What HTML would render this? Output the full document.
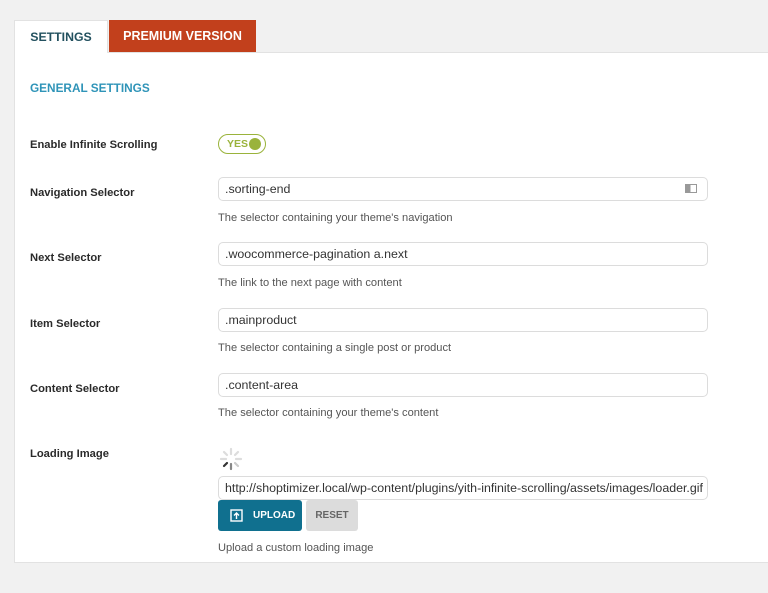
<!DOCTYPE html>
<html><head><style>
body{margin:0;width:768px;height:593px;background:#f1f1f1;font-family:"Liberation Sans",sans-serif;position:relative;overflow:hidden}
.a{position:absolute}
.tab1{left:14px;top:20px;width:94px;height:33px;background:#fff;color:#23515f;font-weight:bold;font-size:12.3px;line-height:33px;text-align:center;border:1px solid #e2e2e2;border-bottom:none;box-sizing:border-box}
.tab2{left:109px;top:20px;width:147px;height:32px;background:#c2401c;color:#fff;font-weight:bold;font-size:12.5px;line-height:33px;text-align:center}
.panel{left:14px;top:52px;width:760px;height:511px;background:#fff;border:1px solid #e2e2e2;box-sizing:border-box}
.h{left:30px;top:81px;color:#2f94b8;font-weight:bold;font-size:11.8px}
.l{left:30px;font-weight:bold;font-size:11.2px;color:#2a2a2a}
.in{left:218px;width:490px;height:24px;border:1px solid #dcdcdc;border-radius:5px;box-sizing:border-box;font-size:12.4px;color:#333;line-height:22px;padding-left:6px;white-space:nowrap}
.d{left:218px;font-size:11.1px;color:#555}
</style></head><body>
<div class="a panel"></div>
<div class="a tab1">SETTINGS</div>
<div class="a tab2">PREMIUM VERSION</div>
<div class="a h">GENERAL SETTINGS</div>
<div class="a l" style="top:139px">Enable Infinite Scrolling</div>
<div class="a" style="left:218px;top:134px;width:48px;height:20px;border:1.5px solid #9ab33b;border-radius:11px;box-sizing:border-box;color:#9ab33b;font-weight:bold;font-size:10.5px;line-height:18px;padding-left:8px">YES</div>
<div class="a" style="left:249px;top:138px;width:12px;height:12px;border-radius:50%;background:#9ab33b"></div>
<div class="a l" style="top:187px">Navigation Selector</div>
<div class="a in" style="top:177px">.sorting-end</div>
<div class="a" style="left:685px;top:184px;width:12px;height:9px;border:1px solid #999;box-sizing:border-box;background:linear-gradient(90deg,#999 45%,transparent 45%)"></div>
<div class="a d" style="top:212px">The selector containing your theme's navigation</div>
<div class="a l" style="top:252px">Next Selector</div>
<div class="a in" style="top:242px">.woocommerce-pagination a.next</div>
<div class="a d" style="top:277px">The link to the next page with content</div>
<div class="a l" style="top:318px">Item Selector</div>
<div class="a in" style="top:308px">.mainproduct</div>
<div class="a d" style="top:342px">The selector containing a single post or product</div>
<div class="a l" style="top:383px">Content Selector</div>
<div class="a in" style="top:373px">.content-area</div>
<div class="a d" style="top:407px">The selector containing your theme's content</div>
<div class="a l" style="top:448px">Loading Image</div>
<svg class="a" style="left:218px;top:446px" width="26" height="26" viewBox="0 0 26 26">
<g stroke-width="2.2" stroke-linecap="round">
<line x1="13" y1="3" x2="13" y2="8" stroke="#ddd"/><line x1="20" y1="6" x2="17" y2="9" stroke="#ddd"/><line x1="23" y1="13" x2="18" y2="13" stroke="#ddd"/><line x1="20" y1="20" x2="17" y2="17" stroke="#ccc"/><line x1="13" y1="23" x2="13" y2="18" stroke="#888"/><line x1="6" y1="20" x2="9" y2="17" stroke="#333"/><line x1="3" y1="13" x2="8" y2="13" stroke="#ddd"/><line x1="6" y1="6" x2="9" y2="9" stroke="#ddd"/></g></svg>
<div class="a in" style="top:476px">http://shoptimizer.local/wp-content/plugins/yith-infinite-scrolling/assets/images/loader.gif</div>
<div class="a" style="left:218px;top:500px;width:84px;height:31px;background:#10708f;border-radius:3px;color:#fff;font-weight:bold;font-size:10px;line-height:31px;padding-left:35px;box-sizing:border-box">UPLOAD</div>
<svg class="a" style="left:230px;top:509px" width="13" height="13" viewBox="0 0 13 13" fill="none" stroke="#fff" stroke-width="1.4"><rect x="1" y="1" width="11" height="11"/><path d="M6.5 10V4M4 6.5l2.5-2.5 2.5 2.5"/></svg>
<div class="a" style="left:306px;top:500px;width:52px;height:31px;background:#dcdcdc;border-radius:3px;color:#666;font-weight:bold;font-size:10px;line-height:31px;text-align:center">RESET</div>
<div class="a d" style="top:542px">Upload a custom loading image</div>
</body></html>
